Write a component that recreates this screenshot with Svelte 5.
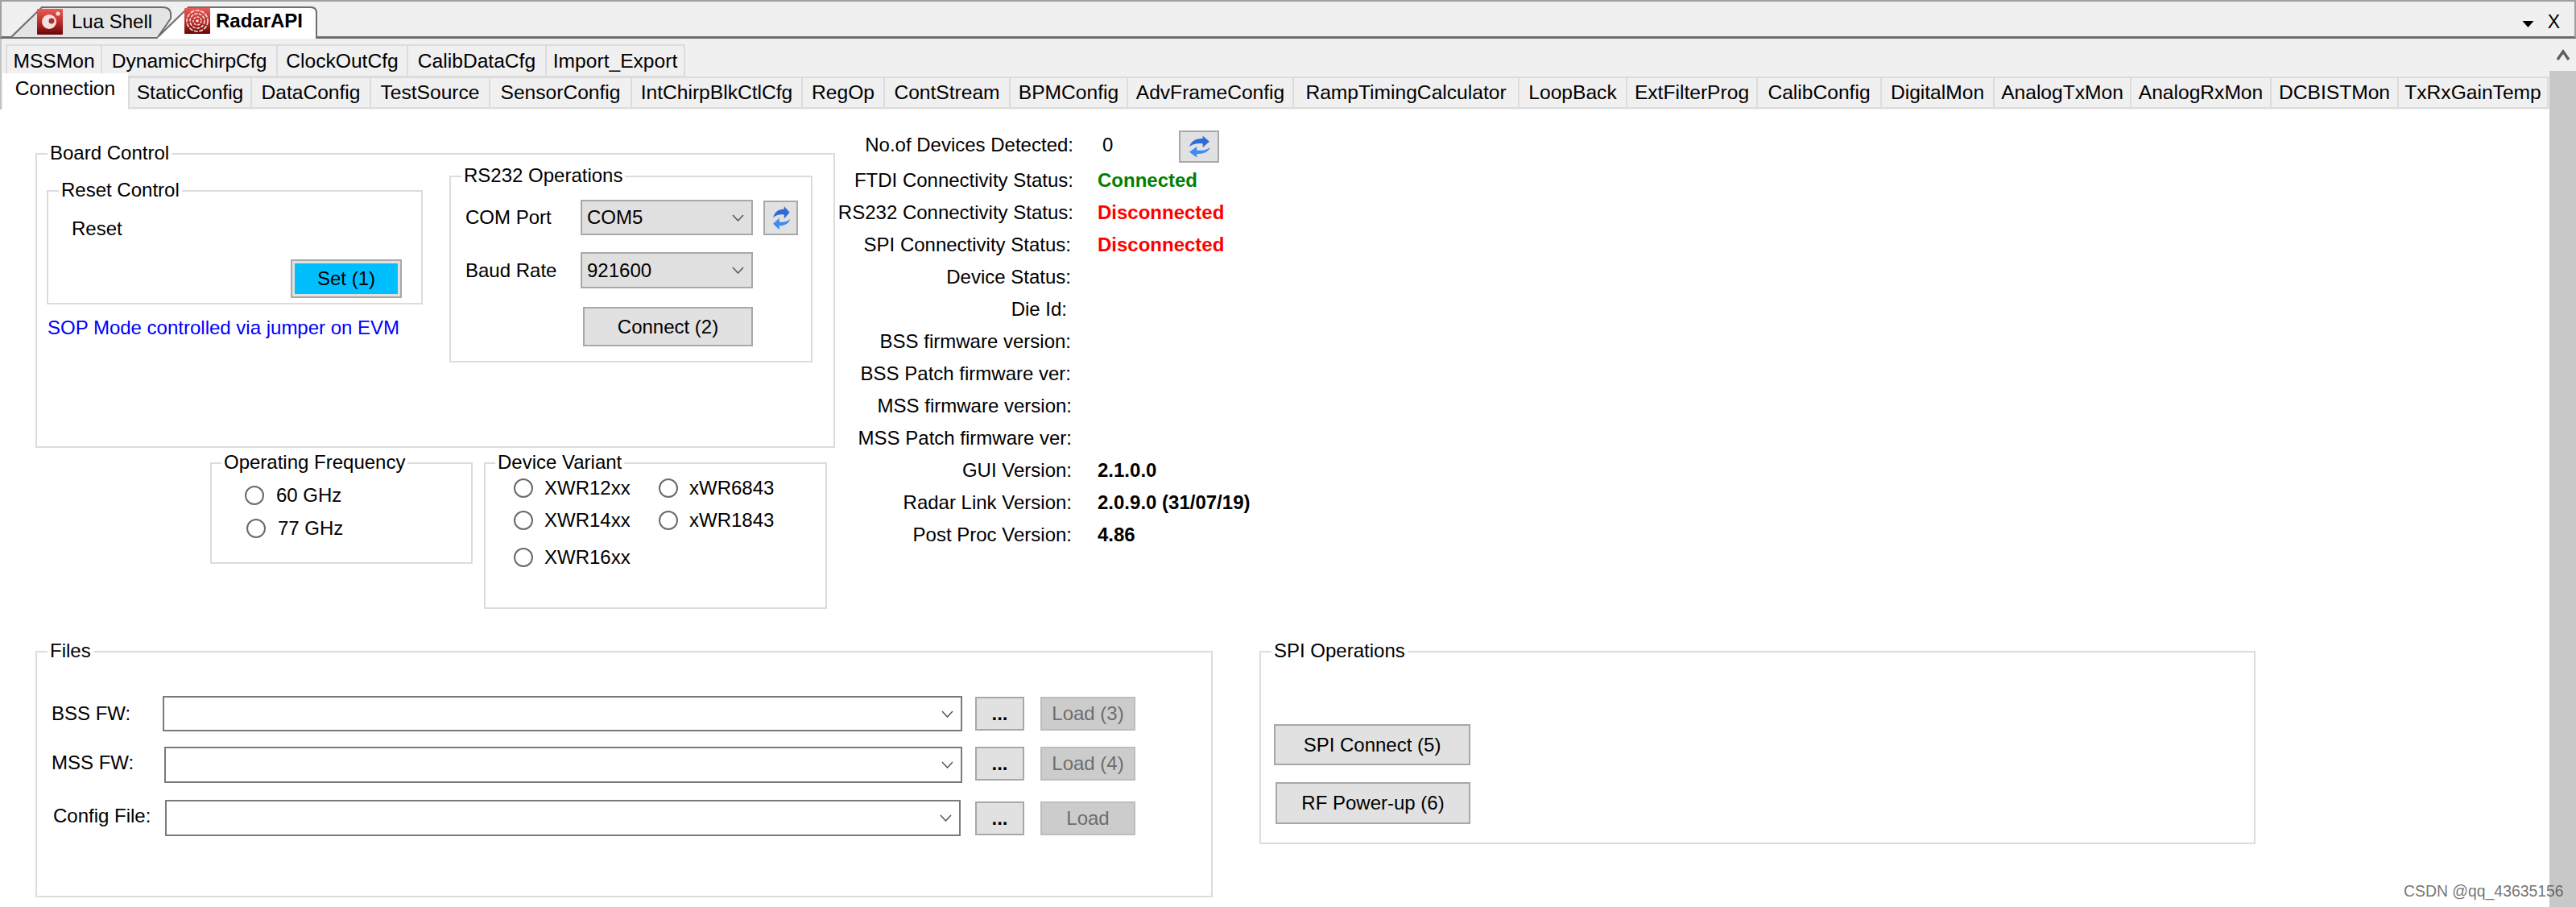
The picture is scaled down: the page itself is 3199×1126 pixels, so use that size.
<script>
  // tab widths are measured from the reference, text is not wide enough to drive them
  const topTabs = [
    { name: 'MSSMon', w: 120 },
    { name: 'DynamicChirpCfg', w: 220 },
    { name: 'ClockOutCfg', w: 164 },
    { name: 'CalibDataCfg', w: 174 },
    { name: 'Import_Export', w: 174 }
  ];
  const subTabs = [
    { name: 'StaticConfig', w: 154 },
    { name: 'DataConfig', w: 150 },
    { name: 'TestSource', w: 150 },
    { name: 'SensorConfig', w: 178 },
    { name: 'IntChirpBlkCtlCfg', w: 214 },
    { name: 'RegOp', w: 104 },
    { name: 'ContStream', w: 158 },
    { name: 'BPMConfig', w: 148 },
    { name: 'AdvFrameConfig', w: 208 },
    { name: 'RampTimingCalculator', w: 282 },
    { name: 'LoopBack', w: 136 },
    { name: 'ExtFilterProg', w: 164 },
    { name: 'CalibConfig', w: 156 },
    { name: 'DigitalMon', w: 142 },
    { name: 'AnalogTxMon', w: 172 },
    { name: 'AnalogRxMon', w: 176 },
    { name: 'DCBISTMon', w: 160 },
    { name: 'TxRxGainTemp', w: 188 }
  ];
  const status = [
    { label: 'FTDI Connectivity Status:', value: 'Connected', kind: 'ok', pad: 0 },
    { label: 'RS232 Connectivity Status:', value: 'Disconnected', kind: 'bad', pad: 0 },
    { label: 'SPI Connectivity Status:', value: 'Disconnected', kind: 'bad', pad: 3 },
    { label: 'Device Status:', value: '', kind: '', pad: 3 },
    { label: 'Die Id:', value: '', kind: '', pad: 8 },
    { label: 'BSS firmware version:', value: '', kind: '', pad: 3 },
    { label: 'BSS Patch firmware ver:', value: '', kind: '', pad: 3 },
    { label: 'MSS firmware version:', value: '', kind: '', pad: 2 },
    { label: 'MSS Patch firmware ver:', value: '', kind: '', pad: 2 },
    { label: 'GUI Version:', value: '2.1.0.0', kind: 'ver', pad: 2 },
    { label: 'Radar Link Version:', value: '2.0.9.0 (31/07/19)', kind: 'ver', pad: 2 },
    { label: 'Post Proc Version:', value: '4.86', kind: 'ver', pad: 2 }
  ];
  const variants = ['XWR12xx', 'xWR6843', 'XWR14xx', 'xWR1843', 'XWR16xx'];
  const files = [
    { label: 'BSS FW:', load: 'Load (3)', cls: 'r1' },
    { label: 'MSS FW:', load: 'Load (4)', cls: 'r2' },
    { label: 'Config File:', load: 'Load', cls: 'r3' }
  ];
</script>

{#snippet refresh()}
  <svg class="refresh" viewBox="0 0 50 40" preserveAspectRatio="none">
    <path d="M12 20 C15 11 22 9 30 9 L30 5 L39 13 L30 21 L30 16 C24 15 17 16 12 20 Z" fill="#2f6bd8" />
    <path d="M40 21 C37 29 28 30 22 30 L22 35 L12 27.5 L22 20 L22 25 C28 26 35 25 40 21 Z" fill="#3f8bf0" />
  </svg>
{/snippet}

{#snippet chevron()}
  <svg class="chev" viewBox="0 0 15 9"><path d="M1 1 L7.5 8 L14 1" fill="none" stroke="#555" stroke-width="1.5" /></svg>
{/snippet}

<div class="app">
  <header class="docbar">
    <div class="doctab lua">
      <svg class="tabshape" viewBox="0 0 199 38">
        <path d="M0 38 L38 1 H188 Q198 1 198 10 V15 L182 38" fill="#e4e4e4" stroke="#6d6d6d" stroke-width="2" />
      </svg>
      <svg class="appicon" viewBox="0 0 32 32">
        <defs>
          <linearGradient id="redIcon" x1="0" y1="0" x2="0" y2="1">
            <stop offset="0" stop-color="#ee5a55" />
            <stop offset="0.55" stop-color="#b82a28" />
            <stop offset="1" stop-color="#640808" />
          </linearGradient>
        </defs>
        <rect width="32" height="32" rx="1" fill="url(#redIcon)" />
        <circle cx="15" cy="16" r="9" fill="#f3e3e0" />
        <circle cx="18" cy="15" r="3.5" fill="#b03030" />
        <circle cx="26" cy="6" r="2.5" fill="#f3e3e0" />
      </svg>
      <span>Lua Shell</span>
    </div>
    <div class="doctab radar">
      <svg class="tabshape" viewBox="0 0 199 40">
        <path d="M0 38 L38 1 H190 Q197 1 197 8 V40 H0 Z" fill="#fff" />
        <path d="M0 38 L38 1 H190 Q197 1 197 8 V40" fill="none" stroke="#6d6d6d" stroke-width="2" />
      </svg>
      <svg class="appicon" viewBox="0 0 32 32">
        <rect width="32" height="32" rx="1" fill="url(#redIcon)" />
        <g fill="none" stroke="#f3e3e0" stroke-width="1.6">
          <circle cx="16" cy="16" r="13" stroke-dasharray="5 1.5" />
          <circle cx="16" cy="16" r="9" stroke-dasharray="4 1.5" />
          <circle cx="16" cy="16" r="5" stroke-dasharray="3 1.5" />
        </g>
        <circle cx="16" cy="16" r="1.8" fill="#f3e3e0" />
      </svg>
      <b>RadarAPI</b>
    </div>
    <div class="winctl">
      <svg class="drop" viewBox="0 0 14 8"><path d="M0 0 H14 L7 8 Z" fill="#000" /></svg>
      <span class="close">X</span>
    </div>
  </header>

  <div class="body">
    <div class="content">
      <nav class="tabs">
        <div class="tabrow first">
          {#each topTabs as t}
            <div class="tab" style="width:{t.w}px">{t.name}</div>
          {/each}
        </div>
        <div class="tabrow second">
          <div class="tab active">Connection</div>
          {#each subTabs as t}
            <div class="tab" style="width:{t.w}px">{t.name}</div>
          {/each}
        </div>
      </nav>

      <main class="page">
        <section class="top">
          <div class="leftcol">
            <div class="group board">
              <span class="legend">Board Control</span>
              <div class="resetcol">
                <div class="group reset">
                  <span class="legend">Reset Control</span>
                  <div class="resetlabel">Reset</div>
                  <button class="btn setbtn"><span>Set (1)</span></button>
                </div>
                <div class="sop">SOP Mode controlled via jumper on EVM</div>
              </div>
              <div class="group rs232">
                <span class="legend">RS232 Operations</span>
                <div class="formrow">
                  <span class="formlabel">COM Port</span>
                  <div class="combo grey"><span>COM5</span>{@render chevron()}</div>
                  <button class="btn iconbtn small">{@render refresh()}</button>
                </div>
                <div class="formrow baud">
                  <span class="formlabel">Baud Rate</span>
                  <div class="combo grey"><span>921600</span>{@render chevron()}</div>
                </div>
                <button class="btn connect">Connect (2)</button>
              </div>
            </div>

            <div class="options">
              <div class="group freq">
                <span class="legend">Operating Frequency</span>
                <label class="radio"><i></i>60 GHz</label>
                <label class="radio second77"><i></i>77 GHz</label>
              </div>
              <div class="group variant">
                <span class="legend">Device Variant</span>
                <div class="variantgrid">
                  {#each variants as v}
                    <label class="radio"><i></i>{v}</label>
                  {/each}
                </div>
              </div>
            </div>
          </div>

          <div class="status">
            <div class="strow firstrow">
              <span class="stlabel">No.of Devices Detected:</span>
              <span class="count">0</span>
              <button class="btn iconbtn big">{@render refresh()}</button>
            </div>
            {#each status as s}
              <div class="strow">
                <span class="stlabel" style="padding-right:{s.pad}px">{s.label}</span>
                <span class="stvalue {s.kind}">{s.value}</span>
              </div>
            {/each}
          </div>
        </section>

        <section class="bottom">
          <div class="group filesbox">
            <span class="legend">Files</span>
            {#each files as f}
              <div class="filerow {f.cls}">
                <span class="filelabel">{f.label}</span>
                <div class="combo">{@render chevron()}</div>
                <button class="btn dots">...</button>
                <button class="btn load">{f.load}</button>
              </div>
            {/each}
          </div>
          <div class="group spi">
            <span class="legend">SPI Operations</span>
            <button class="btn spibtn">SPI Connect (5)</button>
            <button class="btn spibtn rf">RF Power-up (6)</button>
          </div>
        </section>
      </main>
    </div>

    <aside class="scrollbar">
      <div class="up">
        <svg viewBox="0 0 16 14"><path d="M1 13 L8 3 L15 13" fill="none" stroke="#606060" stroke-width="3.5" /></svg>
      </div>
      <div class="thumb"></div>
    </aside>
  </div>

  <div class="watermark">CSDN @qq_43635156</div>
</div>

<style>
  :global(body) {
    margin: 0;
    background: #fff;
  }
  .app {
    position: relative;
    width: 3199px;
    height: 1126px;
    overflow: hidden;
    font-family: "Liberation Sans", Arial, sans-serif;
    font-size: 24px;
    color: #000;
    background: #fff;
    display: flex;
    flex-direction: column;
  }

  /* document tabs */
  .docbar {
    box-sizing: border-box;
    height: 48px;
    flex: none;
    display: flex;
    padding: 6px 18px 0 14px;
    background: #f0f0f0;
    border-top: 2px solid #a0a0a0;
    border-bottom: 3px solid #6d6d6d;
    border-left: 2px solid #a0a0a0;
    border-right: 2px solid #a0a0a0;
  }
  .doctab {
    position: relative;
    width: 199px;
    height: 38px;
    display: flex;
    align-items: center;
  }
  .doctab.lua {
    margin-left: -2px;
  }
  .doctab.radar {
    margin-left: -17px;
    height: 40px;
  }
  .tabshape {
    position: absolute;
    left: 0;
    top: 0;
    width: 100%;
    height: 100%;
  }
  .appicon {
    position: relative;
    width: 32px;
    height: 32px;
    margin-left: 32px;
    margin-right: 11px;
  }
  .radar .appicon {
    margin-left: 33px;
    margin-right: 7px;
    margin-top: -4px;
  }
  .doctab span,
  .doctab b {
    position: relative;
  }
  .radar b {
    margin-top: -4px;
  }
  .winctl {
    margin-left: auto;
    display: flex;
    align-items: center;
    gap: 17px;
    height: 38px;
  }
  .drop {
    width: 15px;
    height: 8px;
    margin-top: 6px;
  }
  .close {
    font-size: 23px;
  }

  .body {
    flex: 1;
    display: flex;
    min-height: 0;
  }
  .content {
    flex: 1;
    min-width: 0;
  }

  /* config tabs */
  .tabs {
    background: #f0f0f0;
    height: 88px;
    padding-top: 7px;
    box-sizing: border-box;
    border-left: 2px solid #c4c4c4;
    font-size: 24.6px;
  }
  .tabrow {
    display: flex;
  }
  .tabrow.first {
    height: 41px;
    padding-left: 5px;
  }
  .tabrow.second {
    height: 40px;
    margin-top: -1px;
    padding-left: 1px;
  }
  .tab {
    box-sizing: border-box;
    height: 100%;
    margin-right: -2px;
    border: 2px solid #dcdcdc;
    display: flex;
    align-items: center;
    justify-content: center;
    white-space: nowrap;
    flex: none;
  }
  .tab.active {
    position: relative;
    width: 156px;
    height: 46px;
    margin-top: -4px;
    margin-right: 0;
    border: 0;
    background: #fff;
    padding-bottom: 8px;
    z-index: 1;
  }

  /* page */
  .page {
    padding: 24px 0 0 44px;
  }
  .top {
    display: flex;
    height: 596px;
  }
  .leftcol {
    width: 993px;
    padding-top: 30px;
    box-sizing: border-box;
    flex: none;
  }

  .group {
    position: relative;
    box-sizing: border-box;
    border: 2px solid #dcdcdc;
  }
  .legend {
    position: absolute;
    top: -16px;
    left: 13px;
    padding: 0 3px;
    line-height: 28px;
    background: #fff;
    white-space: nowrap;
  }

  .board {
    height: 366px;
    display: flex;
    align-items: flex-start;
    padding: 26px 0 0 12px;
  }
  .resetcol {
    width: 467px;
    margin-top: 18px;
    margin-right: 33px;
  }
  .reset {
    height: 142px;
    display: flex;
    flex-direction: column;
  }
  .resetlabel {
    margin: 32px 0 0 29px;
    line-height: 28px;
  }
  .setbtn {
    align-self: flex-end;
    width: 138px;
    height: 48px;
    margin: 24px 24px 0 0;
    padding: 3px;
  }
  .setbtn span {
    display: flex;
    height: 100%;
    align-items: center;
    justify-content: center;
    background: #00bfff;
  }
  .sop {
    margin: 15px 0 0 1px;
    line-height: 28px;
    color: #0000ff;
    white-space: nowrap;
  }

  .rs232 {
    width: 451px;
    height: 232px;
    padding: 28px 0 0 18px;
  }
  .formrow {
    display: flex;
    align-items: center;
    height: 44px;
  }
  .formrow.baud {
    height: 45px;
    margin-top: 21px;
  }
  .formlabel {
    width: 143px;
    flex: none;
  }
  .combo {
    box-sizing: border-box;
    height: 100%;
    display: flex;
    align-items: center;
    justify-content: space-between;
    border: 2px solid #7a7a7a;
    background: #fff;
    padding: 0 9px 0 6px;
  }
  .combo .chev {
    margin-left: auto;
  }
  .combo.grey {
    width: 214px;
    background: #e0e0e0;
    border-color: #a8a8a8;
  }
  .chev {
    width: 15px;
    height: 9px;
    flex: none;
  }
  .iconbtn {
    display: flex;
    align-items: center;
    justify-content: center;
    padding: 0;
    flex: none;
    overflow: visible;
  }
  .iconbtn.small {
    width: 43px;
    height: 43px;
    margin-left: 13px;
  }
  .iconbtn.small .refresh {
    width: 38px;
    height: 39px;
  }
  .iconbtn.big {
    width: 50px;
    height: 40px;
    margin-left: 80px;
    margin-top: 3px;
  }
  .refresh {
    width: 46px;
    height: 36px;
    flex: none;
  }
  .connect {
    display: block;
    width: 211px;
    height: 49px;
    margin: 23px 0 0 146px;
  }

  .btn {
    box-sizing: border-box;
    font: inherit;
    color: #000;
    background: #e1e1e1;
    border: 2px solid #a8a8a8;
  }

  .options {
    display: flex;
    align-items: flex-start;
    gap: 14px;
    margin-top: 18px;
    padding-left: 217px;
  }
  .freq {
    width: 326px;
    height: 126px;
    padding: 24px 0 0 41px;
  }
  .freq .legend,
  .variant .legend {
    left: 12px;
  }
  .legend + .radio {
    margin-bottom: 11px;
  }
  .second77 {
    margin-left: 2px;
  }
  .radio {
    display: flex;
    align-items: center;
    gap: 15px;
    height: 30px;
    white-space: nowrap;
  }
  .radio i {
    box-sizing: border-box;
    width: 24px;
    height: 24px;
    border: 2px solid #6a6a6a;
    border-radius: 50%;
    background: #fff;
    flex: none;
  }
  .variant {
    width: 426px;
    height: 182px;
    padding: 15px 0 0 35px;
  }
  .variantgrid {
    display: grid;
    grid-template-columns: 180px 180px;
    grid-template-rows: 30px 30px 30px;
    row-gap: 10px;
  }
  .variantgrid .radio {
    gap: 14px;
  }
  .variantgrid .radio:nth-child(5) {
    margin-top: 6px;
  }

  /* status column */
  .status {
    width: 1000px;
  }
  .strow {
    display: flex;
    align-items: center;
    height: 40px;
  }
  .firstrow {
    margin-bottom: 4px;
  }
  .stlabel {
    box-sizing: border-box;
    width: 296px;
    text-align: right;
    white-space: nowrap;
    flex: none;
  }
  .stvalue {
    padding-left: 30px;
    font-weight: bold;
    white-space: nowrap;
  }
  .count {
    margin-left: 36px;
  }
  .firstrow .iconbtn.big {
    margin-left: 82px;
  }
  .ok {
    color: #008000;
  }
  .bad {
    color: #ff0000;
  }

  /* bottom groups */
  .bottom {
    display: flex;
    align-items: flex-start;
    gap: 58px;
    margin-top: 52px;
  }
  .filesbox {
    width: 1462px;
    height: 306px;
    padding: 54px 0 0 18px;
  }
  .filerow {
    display: flex;
    align-items: center;
  }
  .filerow.r1 {
    height: 44px;
  }
  .filerow.r2 {
    height: 45px;
    margin-top: 19px;
  }
  .filerow.r3 {
    height: 45px;
    margin-top: 21px;
    padding-left: 2px;
  }
  .filelabel {
    flex: none;
    width: 138px;
  }
  .r2 .filelabel {
    width: 140px;
    margin-bottom: 6px;
  }
  .r3 .filelabel {
    width: 139px;
    margin-bottom: 6px;
  }
  .filerow .combo {
    width: 993px;
    flex: none;
  }
  .r2 .combo {
    width: 991px;
  }
  .r3 .combo {
    width: 988px;
  }
  .dots {
    width: 61px;
    height: 42px;
    margin-left: 16px;
    padding: 0;
    font-weight: bold;
    flex: none;
  }
  .r2 .dots,
  .r2 .load {
    margin-top: -3px;
  }
  .r3 .dots {
    margin-left: 18px;
  }
  .load {
    width: 118px;
    height: 42px;
    margin-left: 20px;
    padding: 0;
    background: #cccccc;
    border-color: #bdbdbd;
    color: #6d6d6d;
    flex: none;
  }
  .spi {
    width: 1237px;
    height: 240px;
    padding: 89px 0 0 16px;
  }
  .spibtn {
    display: block;
    width: 244px;
    height: 51px;
    padding: 0;
  }
  .spibtn.rf {
    width: 242px;
    height: 52px;
    margin: 21px 0 0 2px;
  }

  .scrollbar {
    width: 33px;
    flex: none;
    display: flex;
    flex-direction: column;
    background: #c8c8c8;
  }
  .up {
    height: 40px;
    background: #f0f0f0;
    display: flex;
    align-items: center;
    justify-content: center;
  }
  .up svg {
    width: 16px;
    height: 14px;
  }
  .thumb {
    flex: 1;
  }

  .watermark {
    position: absolute;
    left: 2985px;
    top: 1095px;
    font-size: 19.4px;
    line-height: 22px;
    color: rgba(70, 70, 70, 0.75);
    white-space: nowrap;
  }
</style>
